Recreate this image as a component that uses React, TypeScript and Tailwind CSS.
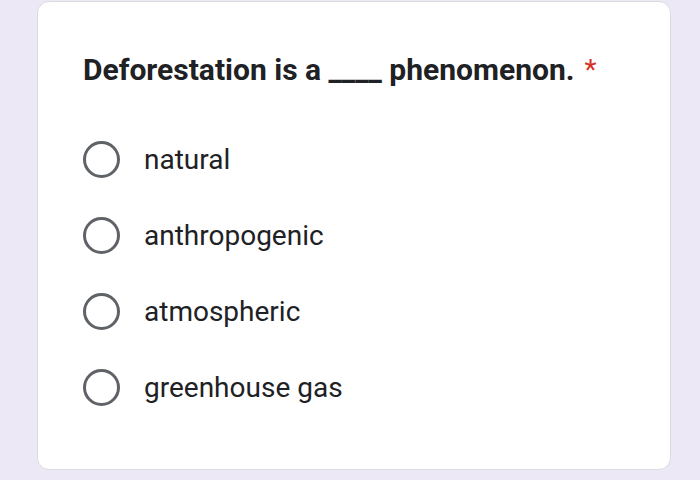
export default function App() {
  const options = ['natural', 'anthropogenic', 'atmospheric', 'greenhouse gas'];
  return (
    <div className="w-[700px] h-[480px] bg-[#ede8f6] pl-[37px] pr-[29px] pt-px overflow-hidden" style={{ fontFamily: 'Roboto, "Liberation Sans", sans-serif' }}>
      <div className="h-[469px] bg-white rounded-[12px] border border-[#dadce0] pl-[45px] pt-[47px]">
        <h1 className="text-[30px] leading-[42px] font-bold text-[#202124] flex items-start">
          <span>Deforestation is a ____ phenomenon.</span>
          <span className="text-[#d93025] ml-[10px] font-normal text-[28px]">*</span>
        </h1>
        <div className="mt-[50px] flex flex-col gap-[39px]">
          {options.map((o) => (
            <label key={o} className="flex items-center gap-[24px] h-[37px]">
              <span className="w-[37px] h-[37px] rounded-full border-[3px] border-[#5f6368] shrink-0" />
              <span className="text-[28px] text-[#202124] leading-[37px]">{o}</span>
            </label>
          ))}
        </div>
      </div>
    </div>
  );
}
